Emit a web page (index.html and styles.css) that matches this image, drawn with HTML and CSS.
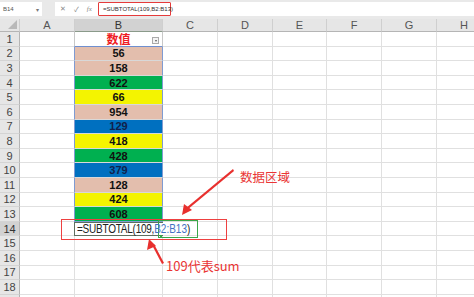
FILE: index.html
```html
<!DOCTYPE html>
<html>
<head>
<meta charset="utf-8">
<link rel="stylesheet" href="styles.css">
</head>
<body>
<div class="page">
  <div class="fbar">
    <div class="namebox"><span>B14</span><span class="dd">▾</span></div>
    <div class="fbar-gap"></div>
    <div class="icons"><span class="ic">✕</span><span class="ic">✓</span><span class="ic fx">fx</span></div>
    <div class="finput"><span class="fbox">=SUBTOTAL(109,B2:B13)</span></div>
  </div>
  <div class="sheet">
    <div class="row hdr">
      <div class="corner"><span class="tri"></span></div>
      <div class="ch">A</div><div class="ch sel">B</div><div class="ch">C</div><div class="ch">D</div><div class="ch">E</div><div class="ch">F</div><div class="ch">G</div><div class="ch">H</div>
    </div>
    <div class="row"><div class="rh">1</div><div class="c"></div><div class="c b title"><span class="tt">数值</span><span class="filter"></span></div><div class="c"></div><div class="c"></div><div class="c"></div><div class="c"></div><div class="c"></div><div class="c"></div></div>
    <div class="row"><div class="rh">2</div><div class="c"></div><div class="c b v pink">56</div><div class="c"></div><div class="c"></div><div class="c"></div><div class="c"></div><div class="c"></div><div class="c"></div></div>
    <div class="row"><div class="rh">3</div><div class="c"></div><div class="c b v pink">158</div><div class="c"></div><div class="c"></div><div class="c"></div><div class="c"></div><div class="c"></div><div class="c"></div></div>
    <div class="row"><div class="rh">4</div><div class="c"></div><div class="c b v green">622</div><div class="c"></div><div class="c"></div><div class="c"></div><div class="c"></div><div class="c"></div><div class="c"></div></div>
    <div class="row"><div class="rh">5</div><div class="c"></div><div class="c b v yellow">66</div><div class="c"></div><div class="c"></div><div class="c"></div><div class="c"></div><div class="c"></div><div class="c"></div></div>
    <div class="row"><div class="rh">6</div><div class="c"></div><div class="c b v pink">954</div><div class="c"></div><div class="c"></div><div class="c"></div><div class="c"></div><div class="c"></div><div class="c"></div></div>
    <div class="row"><div class="rh">7</div><div class="c"></div><div class="c b v blue">129</div><div class="c"></div><div class="c"></div><div class="c"></div><div class="c"></div><div class="c"></div><div class="c"></div></div>
    <div class="row"><div class="rh">8</div><div class="c"></div><div class="c b v yellow">418</div><div class="c"></div><div class="c"></div><div class="c"></div><div class="c"></div><div class="c"></div><div class="c"></div></div>
    <div class="row"><div class="rh">9</div><div class="c"></div><div class="c b v green">428</div><div class="c"></div><div class="c"></div><div class="c"></div><div class="c"></div><div class="c"></div><div class="c"></div></div>
    <div class="row"><div class="rh">10</div><div class="c"></div><div class="c b v blue">379</div><div class="c"></div><div class="c"></div><div class="c"></div><div class="c"></div><div class="c"></div><div class="c"></div></div>
    <div class="row"><div class="rh">11</div><div class="c"></div><div class="c b v pink">128</div><div class="c"></div><div class="c"></div><div class="c"></div><div class="c"></div><div class="c"></div><div class="c"></div></div>
    <div class="row"><div class="rh">12</div><div class="c"></div><div class="c b v yellow">424</div><div class="c"></div><div class="c"></div><div class="c"></div><div class="c"></div><div class="c"></div><div class="c"></div></div>
    <div class="row"><div class="rh">13</div><div class="c"></div><div class="c b v green last">608</div><div class="c"></div><div class="c"></div><div class="c"></div><div class="c"></div><div class="c"></div><div class="c"></div></div>
    <div class="row"><div class="rh sel">14</div><div class="c"></div><div class="c active"><span class="formula"><span class="pre">=SUBTOTAL(109,</span><span class="ref">B2:B13</span>)</span></div><div class="c"></div><div class="c"></div><div class="c"></div><div class="c"></div><div class="c"></div><div class="c"></div></div>
    <div class="row"><div class="rh">15</div><div class="c"></div><div class="c"></div><div class="c"></div><div class="c"></div><div class="c"></div><div class="c"></div><div class="c"></div><div class="c"></div></div>
    <div class="row"><div class="rh">16</div><div class="c"></div><div class="c"></div><div class="c"></div><div class="c"></div><div class="c"></div><div class="c"></div><div class="c"></div><div class="c"></div></div>
    <div class="row"><div class="rh">17</div><div class="c"></div><div class="c"></div><div class="c"></div><div class="c"></div><div class="c"></div><div class="c"></div><div class="c"></div><div class="c"></div></div>
    <div class="row"><div class="rh">18</div><div class="c"></div><div class="c"></div><div class="c"></div><div class="c"></div><div class="c"></div><div class="c"></div><div class="c"></div><div class="c"></div></div>
    <div class="row"><div class="rh">19</div><div class="c"></div><div class="c"></div><div class="c"></div><div class="c"></div><div class="c"></div><div class="c"></div><div class="c"></div><div class="c"></div></div>
  </div>

  <div class="redbox"></div>
  <div class="greenbox"><span class="gdot"></span></div>
  <svg class="arrows" width="474" height="297" viewBox="0 0 474 297">
    <polygon points="233,169 234,171 187,210 186,208" fill="#e8302e"/>
    <polygon points="182,215 184,204 192,210" fill="#e8302e"/>
    <polygon points="164,263 162,264 152,245 154,244" fill="#e8302e"/>
    <polygon points="149,239 147,250 156,246" fill="#e8302e"/>
  </svg>
  <span class="note note1">数据区域</span>
  <span class="note note2">109代表sum</span>
</div>
</body>
</html>
```
FILE: styles.css
```css
* { box-sizing: border-box; }
html, body { margin: 0; padding: 0; background: #fff; }
body { font-family: "Liberation Sans", Arial, "Noto Sans CJK SC", sans-serif; overflow: hidden; }
.page { position: relative; width: 474px; height: 297px; overflow: hidden; }

.fbar { display: flex; align-items: stretch; height: 19px; background: #e9e9e9; padding: 2px 0 3px 0; }
.namebox { width: 42px; background: #fff; display: flex; align-items: center; justify-content: space-between; padding: 0 3px; font-size: 6px; color: #555; }
.namebox .dd { font-size: 6px; color: #777; }
.fbar-gap { width: 13px; }
.icons { width: 43px; background: #fff; display: flex; align-items: center; gap: 8px; padding-left: 5px; font-size: 7px; color: #888; }
.icons .fx { font-style: italic; font-family: "Liberation Serif", serif; }
.finput { flex: 1; background: #fff; display: flex; align-items: center; }
.fbox { display: flex; align-items: center; height: 14px; width: 73px; border: 1.5px solid #e53b3b; border-radius: 1px; padding-left: 4px; font-size: 6px; color: #333; white-space: nowrap; }

.sheet { display: flex; flex-direction: column; }
.row { display: grid; grid-template-columns: 20px 55px 88px 55px 55px 54px 55px 55px 55px; height: 14.6px; flex: none; }
.row.hdr { height: 13px; }
.corner { background: #e6e6e6; border-right: 1px solid #cfcfcf; border-bottom: 1px solid #b5b5b5; position: relative; }
.tri { position: absolute; right: 2px; bottom: 2px; width: 0; height: 0; border-left: 9px solid transparent; border-bottom: 9px solid #b9b9b9; }
.ch { background: #e6e6e6; border-right: 1px solid #cfcfcf; border-bottom: 1px solid #b5b5b5; font-size: 11px; color: #555; display: flex; align-items: center; justify-content: center; }
.ch.sel { background: #d2d2d2; border-bottom: 1px solid #8a9a8a; color: #333; }
.rh { background: #e6e6e6; border-right: 1px solid #b5b5b5; border-bottom: 1px solid #d4d4d4; font-size: 11px; color: #444; display: flex; align-items: center; justify-content: center; }
.rh.sel { background: #d2d2d2; color: #333; }
.c { border-right: 1px solid #e0e0e0; border-bottom: 1px solid #e0e0e0; }

.b { display: flex; align-items: center; justify-content: center; border-left: 1px solid #7f9bd2; border-right: 1px solid #7f9bd2; margin-left: -1px; position: relative; }
.title { border-left-color: #c8c8c8; border-right-color: #c8c8c8; border-bottom: 1px solid #6f8fcf; }
.tt { color: #ee1c25; font-weight: bold; font-size: 12px; line-height: 1; font-family: "Noto Sans CJK SC", sans-serif; }
.filter { position: absolute; right: 3px; bottom: 2px; width: 7px; height: 7px; border: 1px solid #aaa; background: #f4f4f4; }
.filter::after { content: ""; position: absolute; left: 1.5px; top: 2px; border-left: 1.5px solid transparent; border-right: 1.5px solid transparent; border-top: 2px solid #555; }
.v { font-weight: bold; font-size: 11px; color: #111; border-bottom: 1px solid #d8d8d8; }
.v.last { border-bottom: 1px solid #7f9bd2; }
.pink { background: #e3bead; }
.green { background: #00b050; }
.yellow { background: #f4f400; }
.blue { background: #0070c0; color: #10204a; }

.active { position: relative; border: 1px solid #5f6f5f; margin-left: -1px; border-right: none; }
.formula { position: absolute; left: 2px; top: -1px; white-space: nowrap; font-size: 12.5px; color: #222; z-index: 2; line-height: 15px; transform: scaleX(0.8); transform-origin: 0 50%; }
.pre { letter-spacing: -0.3px; }
.ref { color: #4472c4; }

.redbox { position: absolute; left: 61px; top: 219px; width: 166px; height: 21px; border: 1.5px solid #ee4040; }
.greenbox { position: absolute; left: 158px; top: 220px; width: 40px; height: 18px; border: 1.5px solid #3aa74a; }
.gdot { position: absolute; left: 1px; bottom: 0px; width: 2px; height: 2px; background: #3aa74a; }
.arrows { position: absolute; left: 0; top: 0; }
.note { position: absolute; color: #ea3535; font-family: "Noto Sans CJK SC", sans-serif; white-space: nowrap; line-height: 1; }
.note1 { left: 240px; top: 171px; font-size: 12.5px; }
.note2 { left: 166px; top: 259px; font-size: 13px; }
```
